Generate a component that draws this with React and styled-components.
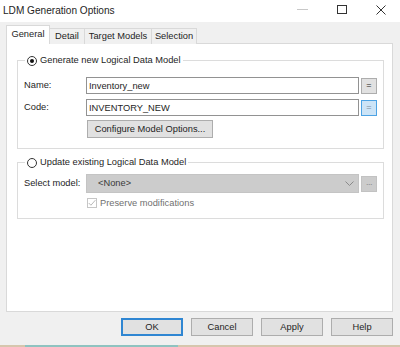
import React from "react";
import styled, { createGlobalStyle } from "styled-components";

const GlobalStyle = createGlobalStyle`
    html, body {
        margin: 0;
        padding: 0;
        background: #f0f0f0;
    }
    body {
        font-family: "Liberation Sans", Arial, sans-serif;
        font-size: 9.3px;
        color: #1e1e1e;
    }
`;

export default function App() {
    return (
        <Window>
            <GlobalStyle />
            <TitleBar>
                <Title>LDM Generation Options</Title>
                <Controls>
                    <CtlButton>
                        <svg width="11" height="2" viewBox="0 0 11 2">
                            <rect x="0" y="0" width="11" height="1" fill="#c8c8c8" />
                        </svg>
                    </CtlButton>
                    <CtlButton>
                        <svg width="10" height="9" viewBox="0 0 10 9">
                            <rect x="0.5" y="0.5" width="9" height="8" fill="none" stroke="#333" />
                        </svg>
                    </CtlButton>
                    <CtlButton>
                        <svg width="10" height="10" viewBox="0 0 10 10">
                            <path d="M0.5 0.5 L9.5 9.5 M9.5 0.5 L0.5 9.5" stroke="#333" strokeWidth="1" />
                        </svg>
                    </CtlButton>
                </Controls>
            </TitleBar>

            <Body>
                <TabStrip>
                    <Tab $active $w={44}>General</Tab>
                    <Tab $w={35}>Detail</Tab>
                    <Tab $w={68}>Target Models</Tab>
                    <Tab $w={46}>Selection</Tab>
                </TabStrip>

                <Panel>
                    <Group>
                        <Legend>
                            <Radio $checked />
                            Generate new Logical Data Model
                        </Legend>
                        <Row>
                            <Label>Name:</Label>
                            <TextBox>Inventory_new</TextBox>
                            <SmallButton>=</SmallButton>
                        </Row>
                        <Row>
                            <Label>Code:</Label>
                            <TextBox>INVENTORY_NEW</TextBox>
                            <SmallButton $focus>=</SmallButton>
                        </Row>
                        <ConfigureButton>Configure Model Options...</ConfigureButton>
                    </Group>

                    <Group $second>
                        <Legend>
                            <Radio />
                            Update existing Logical Data Model
                        </Legend>
                        <Row $tall>
                            <Label>Select model:</Label>
                            <Combo>
                                <span>&lt;None&gt;</span>
                                <svg width="9" height="5" viewBox="0 0 9 5">
                                    <path d="M0.5 0.5 L4.5 4.5 L8.5 0.5" fill="none" stroke="#8a8a8a" />
                                </svg>
                            </Combo>
                            <SmallButton $disabled>...</SmallButton>
                        </Row>
                        <CheckRow>
                            <CheckBox>
                                <svg width="9" height="8" viewBox="0 0 9 8">
                                    <path d="M0.8 4 L3.3 6.5 L8.3 0.8" fill="none" stroke="#b0b0b0" strokeWidth="1" />
                                </svg>
                            </CheckBox>
                            Preserve modifications
                        </CheckRow>
                    </Group>
                </Panel>

                <ButtonRow>
                    <DlgButton $default>OK</DlgButton>
                    <DlgButton>Cancel</DlgButton>
                    <DlgButton>Apply</DlgButton>
                    <DlgButton>Help</DlgButton>
                </ButtonRow>
            </Body>

            <Taskbar>
                <TaskSeg $w={25} $c="#d6c6ad" />
                <TaskSeg $w={153} $c="#8fc3c0" />
                <TaskSeg $grow $c="#d6c6ad" />
            </Taskbar>
        </Window>
    );
}

const Window = styled.div`
    width: 400px;
    height: 347px;
    display: flex;
    flex-direction: column;
    background: #f0f0f0;
    overflow: hidden;
`;

const TitleBar = styled.div`
    height: 22px;
    display: flex;
    align-items: center;
    background: #fff;
    padding-left: 3px;
`;

const Title = styled.div`
    font-size: 10.1px;
    flex: 1;
    padding-bottom: 2px;
`;

const Controls = styled.div`
    display: flex;
    height: 100%;
`;

const CtlButton = styled.div`
    width: 39px;
    display: flex;
    align-items: center;
    justify-content: center;
    padding-bottom: 3px;
`;

const Body = styled.div`
    flex: 1;
    display: flex;
    flex-direction: column;
    padding: 4px 7px 0 6px;
`;

const TabStrip = styled.div`
    display: flex;
    align-items: flex-end;
    height: 18px;
    margin-bottom: -1px;
`;

const Tab = styled.div`
    width: ${(p) => p.$w}px;
    height: ${(p) => (p.$active ? 19 : 16)}px;
    box-sizing: border-box;
    display: flex;
    align-items: center;
    justify-content: center;
    padding-bottom: ${(p) => (p.$active ? 3 : 1)}px;
    background: ${(p) => (p.$active ? "#fff" : "#f0f0f0")};
    border: 1px solid #d9d9d9;
    border-bottom: none;
    margin-left: ${(p) => (p.$active ? 0 : -1)}px;
    position: relative;
    z-index: ${(p) => (p.$active ? 2 : 1)};
    &:nth-child(2) {
        margin-left: 0;
        border-left: none;
    }
`;

const Panel = styled.div`
    height: 269px;
    box-sizing: border-box;
    background: #fff;
    border: 1px solid #d9d9d9;
    padding: 10px 8px 0 10px;
    display: flex;
    flex-direction: column;
`;

const Group = styled.fieldset`
    margin: ${(p) => (p.$second ? "7px" : "0")} 0 0 0;
    padding: ${(p) => (p.$second ? "5px 6px 8px 6px" : "10px 6px 10px 6px")};
    border: 1px solid #dcdcdc;
    display: flex;
    flex-direction: column;
    gap: 5px;
    min-width: 0;
`;

const Legend = styled.legend`
    display: flex;
    align-items: center;
    gap: 3px;
    padding: 0 2px 0 2px;
    margin-left: 1px;
    line-height: 13px;
    height: 13px;
`;

const Radio = styled.span`
    width: 10px;
    height: 10px;
    box-sizing: border-box;
    border-radius: 50%;
    border: 1px solid #333;
    background: #fff;
    display: flex;
    align-items: center;
    justify-content: center;
    &::after {
        content: "";
        width: 4px;
        height: 4px;
        border-radius: 50%;
        background: ${(p) => (p.$checked ? "#111" : "transparent")};
    }
`;

const Row = styled.div`
    display: flex;
    align-items: center;
    height: ${(p) => (p.$tall ? 19 : 17)}px;
`;

const Label = styled.div`
    width: 62px;
    flex: none;
    padding-bottom: 1px;
`;

const TextBox = styled.div`
    flex: 1;
    height: 17px;
    box-sizing: border-box;
    border: 1px solid #929292;
    background: #fff;
    display: flex;
    align-items: center;
    padding-left: 2px;
`;

const SmallButton = styled.div`
    width: 16px;
    height: 16px;
    flex: none;
    box-sizing: border-box;
    margin-left: 2px;
    display: flex;
    align-items: center;
    justify-content: center;
    font-size: 9px;
    background: ${(p) => (p.$focus ? "#cce4f7" : p.$disabled ? "#cccccc" : "#e1e1e1")};
    border: 1px solid ${(p) => (p.$focus ? "#4da3e4" : p.$disabled ? "#c2c2c2" : "#adadad")};
    color: ${(p) => (p.$focus ? "#7a8a98" : p.$disabled ? "#8a8a8a" : "#222")};
    padding-bottom: ${(p) => (p.$disabled ? 3 : 1)}px;
    letter-spacing: ${(p) => (p.$disabled ? "-0.5px" : "0")};
`;

const ConfigureButton = styled.div`
    margin: -1px 0 0 63px;
    width: 126px;
    height: 18px;
    box-sizing: border-box;
    background: #e1e1e1;
    border: 1px solid #adadad;
    display: flex;
    align-items: center;
    justify-content: center;
    padding-bottom: 1px;
`;

const Combo = styled.div`
    flex: 1;
    height: 19px;
    box-sizing: border-box;
    background: #cccccc;
    border: 1px solid #c4c4c4;
    display: flex;
    align-items: center;
    justify-content: space-between;
    padding: 0 4px 1px 11px;
    color: #3a3a3a;
`;

const CheckRow = styled.div`
    display: flex;
    align-items: center;
    gap: 3px;
    height: 14px;
    margin: -2px 0 0 63px;
    color: #707070;
`;

const CheckBox = styled.span`
    width: 10px;
    height: 10px;
    box-sizing: border-box;
    border: 1px solid #c6c6c6;
    background: #fff;
    display: flex;
    align-items: center;
    justify-content: center;
`;

const ButtonRow = styled.div`
    display: flex;
    justify-content: flex-end;
    gap: 8px;
    margin-top: 6px;
`;

const DlgButton = styled.div`
    width: 62px;
    height: 18px;
    box-sizing: border-box;
    background: #e1e1e1;
    border: ${(p) => (p.$default ? "2px solid #2f86d2" : "1px solid #adadad")};
    display: flex;
    align-items: center;
    justify-content: center;
    padding-bottom: 1px;
`;

const Taskbar = styled.div`
    height: 2px;
    display: flex;
`;

const TaskSeg = styled.div`
    width: ${(p) => (p.$w ? `${p.$w}px` : "auto")};
    flex: ${(p) => (p.$grow ? 1 : "none")};
    background: ${(p) => p.$c};
`;
